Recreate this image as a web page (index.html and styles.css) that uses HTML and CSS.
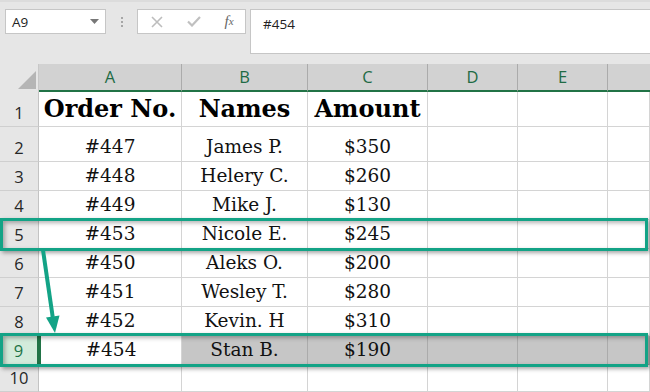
FILE: index.html
```html
<!DOCTYPE html>
<html>
<head>
<meta charset="utf-8">
<link rel="stylesheet" href="styles.css">
</head>
<body>
<div class="toolbar">
  <div class="namebox"><span>A9</span><svg width="9" height="5" viewBox="0 0 9 5"><path d="M0 0h9L4.5 5z" fill="#777"/></svg></div>
  <div class="grip"><i class="dot"></i><i class="dot"></i><i class="dot"></i></div>
  <div class="fbtns">
    <span class="fb"><svg width="12" height="12" viewBox="0 0 12 12"><path d="M1 1L11 11M11 1L1 11" stroke="#bdbdbd" stroke-width="1.6"/></svg></span>
    <span class="fb"><svg width="14" height="11" viewBox="0 0 14 11"><path d="M1 5.5L5 9.5L13 1" stroke="#c0c0c0" stroke-width="2.2" fill="none"/></svg></span>
    <span class="fb fx">f<sub>x</sub></span>
  </div>
  <div class="finput">#454</div>
</div>
<div class="sheet">
  <div class="corner"><svg width="18" height="18" viewBox="0 0 18 18"><path d="M18 0V18H0z" fill="#b5b5b5"/></svg></div>
  <div class="ch">A</div><div class="ch">B</div><div class="ch">C</div><div class="ch">D</div><div class="ch">E</div><div class="ch last"></div>

  <div class="rh">1</div><div class="c b">Order No.</div><div class="c b">Names</div><div class="c b">Amount</div><div class="c"></div><div class="c"></div><div class="c"></div>
  <div class="rh">2</div><div class="c">#447</div><div class="c">James P.</div><div class="c">$350</div><div class="c"></div><div class="c"></div><div class="c"></div>
  <div class="rh">3</div><div class="c">#448</div><div class="c">Helery C.</div><div class="c">$260</div><div class="c"></div><div class="c"></div><div class="c"></div>
  <div class="rh">4</div><div class="c">#449</div><div class="c">Mike J.</div><div class="c">$130</div><div class="c"></div><div class="c"></div><div class="c"></div>
  <div class="rh">5</div><div class="c">#453</div><div class="c">Nicole E.</div><div class="c">$245</div><div class="c"></div><div class="c"></div><div class="c"></div>
  <div class="rh">6</div><div class="c">#450</div><div class="c">Aleks O.</div><div class="c">$200</div><div class="c"></div><div class="c"></div><div class="c"></div>
  <div class="rh">7</div><div class="c">#451</div><div class="c">Wesley T.</div><div class="c">$280</div><div class="c"></div><div class="c"></div><div class="c"></div>
  <div class="rh">8</div><div class="c">#452</div><div class="c">Kevin. H</div><div class="c">$310</div><div class="c"></div><div class="c"></div><div class="c"></div>
  <div class="rh rsel">9</div><div class="c active">#454</div><div class="c hl">Stan B.</div><div class="c hl">$190</div><div class="c hl"></div><div class="c hl"></div><div class="c hl"></div>
  <div class="rh">10</div><div class="c"></div><div class="c"></div><div class="c"></div><div class="c"></div><div class="c"></div><div class="c"></div>

  <div class="mark mark1"></div>
  <div class="mark mark2"></div>
  <svg class="arrow" width="40" height="90" viewBox="0 0 40 90">
    <path d="M13 2L22.7 69" stroke="#13a386" stroke-width="4" fill="none"/>
    <path d="M25 85L16 69.5L29.5 67.6z" fill="#13a386"/>
  </svg>
</div>
</body>
</html>
```

FILE: styles.css
```css
* { box-sizing: border-box; margin: 0; padding: 0; }
body {
  margin: 0;
  width: 650px;
  height: 392px;
  overflow: hidden;
  background: #fff;
  font-family: "Open Sans", "Noto Sans", sans-serif;
}
.toolbar {
  height: 64px;
  background: #e6e6e6;
  border-top: 2px solid #dcdcdc;
  display: flex;
  align-items: flex-start;
  padding: 7px 0 0 5px;
}
.namebox {
  width: 101px;
  height: 25px;
  background: #fff;
  border: 1px solid #c6c6c6;
  display: flex;
  align-items: center;
  justify-content: space-between;
  padding: 0 6px 0 6px;
  font-size: 13.5px;
  color: #222;
}
.grip {
  width: 31px;
  height: 25px;
  display: flex;
  flex-direction: column;
  align-items: center;
  justify-content: center;
  gap: 2px;
}
.dot { display: block; width: 2px; height: 2px; background: #a6a6a6; }
.fbtns {
  width: 109px;
  height: 25px;
  background: #fff;
  border: 1px solid #c6c6c6;
  display: grid;
  grid-template-columns: 38px 36px 34px;
  align-items: center;
  justify-items: center;
}
.fb { display: flex; align-items: center; justify-content: center; }
.fx {
  font-family: "Liberation Serif", serif;
  font-style: italic;
  font-size: 15px;
  color: #666;
  line-height: 1;
}
.fx sub { font-size: 11px; vertical-align: -1px; }
.finput {
  margin-left: 4px;
  flex: 1;
  height: 45px;
  background: #fff;
  border: 1px solid #c6c6c6;
  border-right: none;
  padding: 4px 12px;
  font-size: 13.5px;
  line-height: 20px;
  color: #222;
}
.sheet {
  position: relative;
  display: grid;
  grid-template-columns: 39px 143px 126px 120px 90px 90px 42px;
  grid-template-rows: 28px 35px 35px 29px 29px 29px 29px 29px 29px 29px 27px;
}
.corner {
  background: #e6e6e6;
  border-right: 1px solid #c8c8c8;
  display: flex;
  align-items: flex-end;
  justify-content: flex-end;
  padding: 0 2px 3px 0;
}
.ch {
  background: #d2d2d2;
  border-right: 1px solid #ababab;
  border-bottom: 2px solid #217346;
  color: #1f6b45;
  font-size: 16.5px;
  display: flex;
  align-items: center;
  justify-content: center;
  padding-bottom: 1px;
}
.ch.last { border-right: none; }
.rh {
  background: #e6e6e6;
  border-right: 1px solid #c3c3c3;
  border-bottom: 1px solid #cfcfcf;
  color: #262626;
  font-size: 16.5px;
  line-height: 20px;
  display: flex;
  align-items: flex-end;
  justify-content: center;
  padding-bottom: 3px;
}
.rh.rsel {
  background: #d3ebdb;
  border-right: 2px solid #217346;
  color: #217346;
}
.c {
  border-right: 1px solid #d4d4d4;
  border-bottom: 1px solid #d4d4d4;
  font-family: "DejaVu Serif", "Liberation Serif", serif;
  font-size: 18.5px;
  line-height: 24px;
  color: #111;
  display: flex;
  align-items: flex-end;
  justify-content: center;
  padding-bottom: 2px;
  white-space: nowrap;
}
.c.b { font-weight: bold; font-size: 24px; line-height: 28px; padding-bottom: 3px; color: #000; }
.c.active { border-left: 2px solid #217346; }
.c.hl {
  background: #c6c6c6;
  border-right-color: #ababab;
  border-bottom-color: #ababab;
}
.mark {
  position: absolute;
  left: 0;
  width: 648px;
  border: 3px solid #13a386;
  box-shadow: 2px 2px 4px rgba(0,0,0,0.35), inset 2px 2px 4px rgba(0,0,0,0.3);
}
.mark1 { top: 154px; height: 33px; }
.mark2 { top: 269px; height: 34px; }
.arrow { position: absolute; left: 30px; top: 184px; }
```
